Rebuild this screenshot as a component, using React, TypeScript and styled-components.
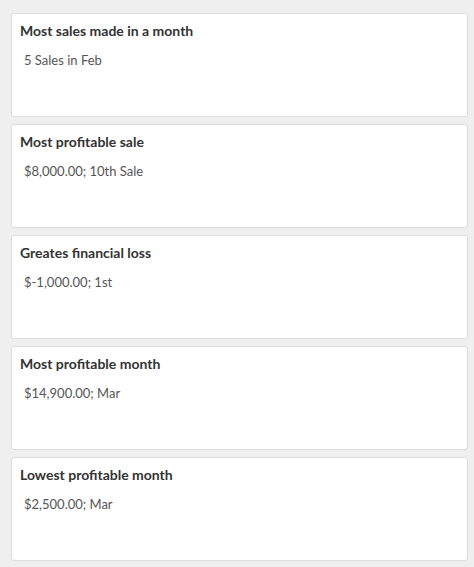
import styled, { createGlobalStyle } from "styled-components";

const GlobalStyle = createGlobalStyle`
    html, body {
        margin: 0;
        padding: 0;
        background-color: #efefef;
        font-family: Lato, "Open Sans", Arial, sans-serif;
    }
`;

const Container = styled.div`
    display: flex;
    flex-direction: column;
    gap: 7px;
    padding: 13px 6px 6px 11px;
`;

const Card = styled.div`
    height: 104px;
    box-sizing: border-box;
    background-color: #fff;
    border: 1px solid #dcdcdc;
    border-radius: 3px;
    padding: 7px 8px;
`;

const Title = styled.div`
    font-size: 14px;
    font-weight: 700;
    color: #333;
    line-height: 20px;
`;

const Value = styled.div`
    margin-top: 9px;
    padding-left: 4px;
    font-size: 13px;
    color: #555;
    line-height: 20px;
`;

const stats = [
    { titulo: "Most sales made in a month", valor: "5 Sales in Feb" },
    { titulo: "Most profitable sale", valor: "$8,000.00; 10th Sale" },
    { titulo: "Greates financial loss", valor: "$-1,000.00; 1st" },
    { titulo: "Most profitable month", valor: "$14,900.00; Mar" },
    { titulo: "Lowest profitable month", valor: "$2,500.00; Mar" },
];

const App = () => {
    return (
        <>
            <GlobalStyle />
            <Container>
                {stats.map((s) => (
                    <Card key={s.titulo}>
                        <Title>{s.titulo}</Title>
                        <Value>{s.valor}</Value>
                    </Card>
                ))}
            </Container>
        </>
    );
};

export default App;
